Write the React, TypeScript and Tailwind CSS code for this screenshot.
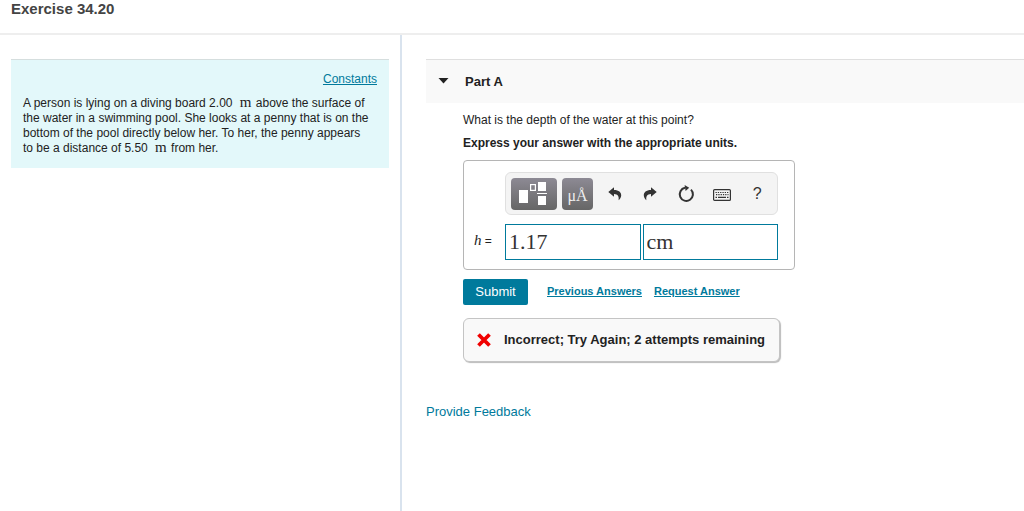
import type { ReactNode } from "react";

function ToolButton({ label, children }: { label: string; children: ReactNode }) {
  return (
    <button
      type="button"
      aria-label={label}
      className="flex h-8 flex-1 items-center justify-center text-[#333]"
    >
      {children}
    </button>
  );
}

function TemplatesIcon() {
  return (
    <svg width="30" height="24" viewBox="0 0 30 24" fill="#fff">
      <rect x="0" y="8" width="9" height="13" />
      <rect x="11.6" y="2.6" width="4.8" height="5.8" fill="none" stroke="#fff" strokeWidth="1.2" />
      <rect x="19" y="0" width="8" height="9" />
      <rect x="18" y="11" width="10" height="1" />
      <rect x="19" y="14" width="8" height="9" />
    </svg>
  );
}

function UndoIcon() {
  return (
    <svg width="14" height="14" viewBox="0 0 14 14" fill="currentColor">
      <path d="M0.3 5 L6 0.2 V3 C10.8 3 13.4 5.4 13.2 8.6 C13.1 10.4 12.2 12.2 10.6 13.2 C11.2 9.8 10 7 6 7 V9.8 Z" />
    </svg>
  );
}

function RedoIcon() {
  return (
    <svg width="14" height="14" viewBox="0 0 14 14" fill="currentColor">
      <path d="M13.7 5 L8 0.2 V3 C3.2 3 0.6 5.4 0.8 8.6 C0.9 10.4 1.8 12.2 3.4 13.2 C2.8 9.8 4 7 8 7 V9.8 Z" />
    </svg>
  );
}

function ResetIcon() {
  return (
    <svg width="18" height="18" viewBox="0 0 18 18">
      <path d="M14 4.6 A6.6 6.6 0 1 1 8 2.8" fill="none" stroke="currentColor" strokeWidth="2" />
      <path d="M7.6 0 L12.2 2.8 L8.6 6 Z" fill="currentColor" />
    </svg>
  );
}

function KeyboardIcon() {
  return (
    <svg width="18" height="16" viewBox="0 0 18 16" fill="none" stroke="currentColor">
      <rect x="0.6" y="3.6" width="16.8" height="10.8" rx="1" strokeWidth="1.2" />
      <path d="M2.5 6.5 H15.5" strokeWidth="1.2" strokeDasharray="1.3 1" />
      <path d="M3 8.7 H15.5" strokeWidth="1.2" strokeDasharray="1.3 1" />
      <path d="M2.5 11.4 H4 M5 11.4 H13 M14 11.4 H15.5" strokeWidth="1.2" />
    </svg>
  );
}

function Unit() {
  return <span className="mr-px ml-1 font-['Liberation_Serif',serif] text-[15px] leading-3">m</span>;
}

function Problem() {
  return (
    <section className="border-t border-[#d5dede] bg-[#e3f8fa] px-3 pt-[11px] pb-3">
      <div className="text-right leading-4">
        <a href="#constants" className="text-[#007a9c] underline">
          Constants
        </a>
      </div>
      <p className="mt-[9px] leading-[15px] text-[#222]">
        A person is lying on a diving board 2.00 <Unit /> above the surface of
        <br />
        the water in a swimming pool. She looks at a penny that is on the
        <br />
        bottom of the pool directly below her. To her, the penny appears
        <br />
        to be a distance of 5.50 <Unit /> from her.
      </p>
    </section>
  );
}

function AnswerBox() {
  return (
    <div className="flex w-[332px] items-end rounded border border-[#b5b5b5] pt-[11px] pr-4 pb-[9px] pl-2.5">
      <label htmlFor="value" className="w-[31px] shrink-0 pb-[11px] leading-4">
        <i className="font-['Liberation_Serif',serif] text-[15px]">h</i> =
      </label>
      <div className="flex-1">
        <div className="flex h-[43px] items-center rounded-md border border-[#e0e0e0] bg-[#f4f4f4] pr-0.5 pl-[5px]">
          <button
            type="button"
            aria-label="Templates"
            className="mr-[5px] flex h-8 w-[46px] shrink-0 items-center justify-center rounded bg-linear-to-b from-[#8d8a94] to-[#666]"
          >
            <TemplatesIcon />
          </button>
          <button
            type="button"
            aria-label="Symbols and units"
            className="mr-1 h-8 w-[31px] shrink-0 rounded bg-linear-to-b from-[#8d8a94] to-[#666] pt-1 font-['Liberation_Serif',serif] text-base leading-7 text-[#eee]"
          >
            μÅ
          </button>
          <ToolButton label="Undo">
            <UndoIcon />
          </ToolButton>
          <ToolButton label="Redo">
            <RedoIcon />
          </ToolButton>
          <ToolButton label="Reset">
            <ResetIcon />
          </ToolButton>
          <ToolButton label="Keyboard shortcuts">
            <KeyboardIcon />
          </ToolButton>
          <ToolButton label="Help">
            <span className="text-base">?</span>
          </ToolButton>
        </div>
        <div className="mt-[9px] flex gap-0.5 font-['Liberation_Serif',serif] text-[22px] text-[#333]">
          <input
            id="value"
            defaultValue="1.17"
            className="h-9 w-0 flex-1 border border-[#007a9c] bg-white px-[3px]"
          />
          <input
            aria-label="Units"
            defaultValue="cm"
            className="h-9 w-0 flex-1 border border-[#007a9c] bg-white px-[3px]"
          />
        </div>
      </div>
    </div>
  );
}

function PartA() {
  return (
    <section>
      <h2 className="flex h-11 items-center border-t border-[#dfdfdf] bg-[#f9f9f9] pl-3 text-[13px] font-bold">
        <button type="button" className="flex items-center gap-4">
          <svg width="11" height="6" viewBox="0 0 11 6" fill="currentColor">
            <path d="M0.5 0 H10.5 L5.5 5.5 Z" />
          </svg>
          Part A
        </button>
      </h2>
      <div className="pt-2 pl-[37px]">
        <p className="leading-[18px]">What is the depth of the water at this point?</p>
        <p className="mt-[5px] mb-2 leading-[18px] font-bold">
          Express your answer with the appropriate units.
        </p>
        <AnswerBox />
        <div className="mt-[9px] flex items-center text-[11px] font-bold">
          <button
            type="submit"
            className="h-[26px] w-[65px] rounded-xs bg-[#007a9c] text-[13px] font-normal text-white"
          >
            Submit
          </button>
          <a href="#previous" className="ml-[19px] pb-0.5 text-[#007a9c] underline">
            Previous Answers
          </a>
          <a href="#request" className="ml-3 pb-0.5 text-[#007a9c] underline">
            Request Answer
          </a>
        </div>
        <div
          role="status"
          className="mt-[13px] flex h-11 w-[317px] items-center gap-3 rounded-md border border-[#c4c4c4] bg-[#f9f9f9] pl-3 text-[13px] font-bold shadow-[1px_1px_1px_#bbb]"
        >
          <svg width="16" height="14" viewBox="0 0 16 14" stroke="#f00000" strokeWidth="3.8">
            <path d="M2.5 1.5 L13.5 12.5 M13.5 1.5 L2.5 12.5" />
          </svg>
          Incorrect; Try Again; 2 attempts remaining
        </div>
      </div>
    </section>
  );
}

export default function App() {
  return (
    <div className="flex min-h-screen flex-col bg-white font-['Liberation_Sans',Arial,sans-serif] text-xs text-[#222]">
      <header className="h-[35px] border-b-2 border-[#eee] pl-[11px]">
        <h1 className="text-[15px] leading-[18px] font-bold text-[#444]">Exercise 34.20</h1>
      </header>
      <div className="flex flex-1">
        <aside className="w-[402px] shrink-0 border-r-2 border-[#d9e3ee] px-[11px] pt-6">
          <Problem />
        </aside>
        <main className="min-w-0 flex-1 pt-6 pl-6">
          <PartA />
          <a href="#feedback" className="mt-10 inline-block text-[13px] leading-5 text-[#007a9c]">
            Provide Feedback
          </a>
        </main>
      </div>
    </div>
  );
}
